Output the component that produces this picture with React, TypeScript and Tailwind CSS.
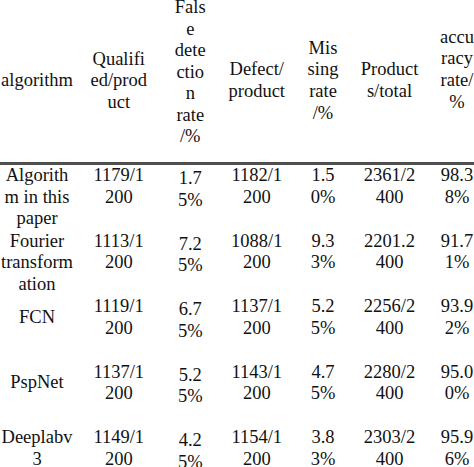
import React from "react"

const widths = ["w-[87px]", "w-[76.5px]", "w-[66.5px]", "w-[66.5px]", "w-[66px]", "w-[67px]", "w-[68px]"]

const header: { lines: string[]; pb?: string }[] = [
  { lines: ["algorithm"] },
  { lines: ["Qualifi", "ed/prod", "uct"] },
  { lines: ["Fals", "e", "dete", "ctio", "n", "rate", "/%"], pb: "pb-[17px]" },
  { lines: ["Defect/", "product"] },
  { lines: ["Mis", "sing", "rate", "/%"] },
  { lines: ["Product", "s/total"] },
  { lines: ["accu", "racy", "rate/", "%"], pb: "pb-[22px]" },
]

const rows: string[][][] = [
  [["Algorith", "m in this", "paper"], ["1179/1", "200"], ["1.7", "5%"], ["1182/1", "200"], ["1.5", "0%"], ["2361/2", "400"], ["98.3", "8%"]],
  [["Fourier", "transform", "ation"], ["1113/1", "200"], ["7.2", "5%"], ["1088/1", "200"], ["9.3", "3%"], ["2201.2", "400"], ["91.7", "1%"]],
  [["FCN"], ["1119/1", "200"], ["6.7", "5%"], ["1137/1", "200"], ["5.2", "5%"], ["2256/2", "400"], ["93.9", "2%"]],
  [["PspNet"], ["1137/1", "200"], ["5.2", "5%"], ["1143/1", "200"], ["4.7", "5%"], ["2280/2", "400"], ["95.0", "0%"]],
  [["Deeplabv", "3"], ["1149/1", "200"], ["4.2", "5%"], ["1154/1", "200"], ["3.8", "3%"], ["2303/2", "400"], ["95.9", "6%"]],
]

export default function App() {
  return (
    <div
      className="w-[474px] h-[467px] overflow-hidden bg-white text-[#111111] text-[18.5px] leading-[21.6px]"
      style={{ fontFamily: '"Liberation Serif", "Times New Roman", serif' }}
    >
      <div className="ml-[-6.5px] w-[500px]">
        {/* header */}
        <div className="flex h-[162px]">
          {header.map((cell, i) => (
            <div key={i} className={`${widths[i]} shrink-0 flex flex-col items-center justify-center text-center whitespace-nowrap ${cell.pb ?? ""}`}>
              {cell.lines.map((l, j) => (
                <div key={j}>{l}</div>
              ))}
            </div>
          ))}
        </div>

        <div className="h-[3px] bg-[#505050]" />

        {/* body */}
        {rows.map((row, r) => (
          <div key={r} className="flex h-[65.5px]">
            {row.map((cell, i) => (
              <div
                key={i}
                className={`${widths[i]} shrink-0 flex flex-col items-center text-center whitespace-nowrap ${i === 2 ? "pt-[3px]" : ""}`}
              >
                {i === 0 && cell.length === 1 ? (
                  <div className="h-[43px] flex items-center">{cell[0]}</div>
                ) : (
                  cell.map((l, j) => <div key={j}>{l}</div>)
                )}
              </div>
            ))}
          </div>
        ))}
      </div>
    </div>
  )
}
